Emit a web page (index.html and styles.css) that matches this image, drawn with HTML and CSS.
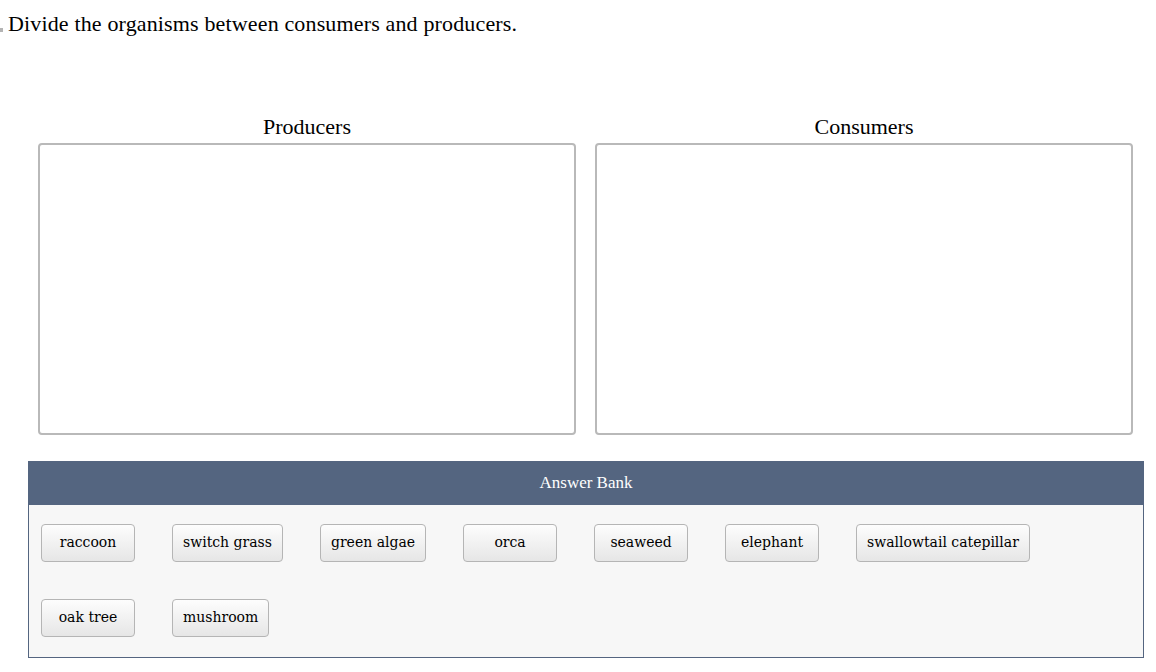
FILE: index.html
```html
<!DOCTYPE html>
<html>
<head>
    <title>Consumers and Producers</title>
    <meta name="viewport" content="width=device-width, initial-scale=1" />
    <link rel="stylesheet" href="styles.css">
</head>
<body>
    <div class="question"><span class="marker"></span>Divide the organisms between consumers and producers.</div>

    <div class="bins">
        <div class="bin">
            <div class="bin-title">Producers</div>
            <div class="bin-box"></div>
        </div>
        <div class="bin">
            <div class="bin-title">Consumers</div>
            <div class="bin-box"></div>
        </div>
    </div>

    <div class="answer-bank">
        <div class="bank-header">Answer Bank</div>
        <div class="bank-items">
            <div class="chip">raccoon</div>
            <div class="chip">switch grass</div>
            <div class="chip">green algae</div>
            <div class="chip">orca</div>
            <div class="chip">seaweed</div>
            <div class="chip">elephant</div>
            <div class="chip">swallowtail catepillar</div>
            <div class="chip">oak tree</div>
            <div class="chip">mushroom</div>
        </div>
    </div>
</body>
</html>
```

FILE: styles.css
```css
body {
    font-family: "Liberation Serif", "Times New Roman", serif;
    margin: 0;
    background-color: #fff;
    color: #000;
}

.question {
    font-size: 22px;
    line-height: 26px;
    letter-spacing: 0.15px;
    padding: 11px 0 0 8px;
    height: 114px;
    box-sizing: border-box;
}

.marker {
    display: inline-block;
    width: 3px;
    height: 4px;
    background-color: #b4b4b4;
    margin-left: -8px;
    margin-right: 5px;
    vertical-align: -1px;
}

.bins {
    display: flex;
    gap: 19px;
    padding: 0 23px 0 38px;
}

.bin {
    flex: 1;
}

.bin-title {
    font-size: 22px;
    text-align: center;
    line-height: 26px;
    height: 29px;
    box-sizing: border-box;
}

.bin-box {
    height: 288px;
    border: 2px solid #b9b9b9;
    border-radius: 4px;
    background-color: #fff;
}

.answer-bank {
    margin: 26px 12px 0 28px;
    border: 1px solid #546580;
    background-color: #f7f7f7;
}

.bank-header {
    background-color: #546580;
    color: #fff;
    text-align: center;
    font-size: 17px;
    height: 43px;
    line-height: 42px;
}

.bank-items {
    display: flex;
    flex-wrap: wrap;
    column-gap: 37px;
    row-gap: 37px;
    padding: 19px 12px 20px 12px;
}

.chip {
    min-width: 94px;
    height: 38px;
    line-height: 34px;
    padding: 0 10px;
    box-sizing: border-box;
    text-align: center;
    font-family: "DejaVu Serif", serif;
    font-size: 14px;
    color: #000;
    border: 1px solid #b5b5b5;
    border-radius: 4px;
    background: linear-gradient(#fdfdfd, #e6e6e6);
}
```
